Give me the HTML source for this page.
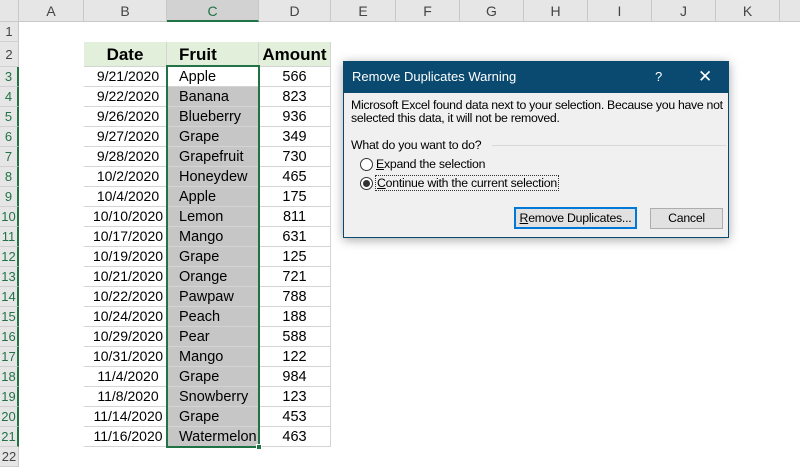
<!DOCTYPE html><html><head><meta charset="utf-8"><style>
*{margin:0;padding:0;box-sizing:border-box}
body{width:800px;height:470px;overflow:hidden;background:#fff;font-family:"Liberation Sans",sans-serif;position:relative}
.a{position:absolute}
.ch{position:absolute;top:0;height:22px;background:#e6e6e6;border-right:1px solid #c8c8c8;border-bottom:1px solid #c8c8c8;font-size:14px;color:#444;text-align:center;line-height:22px}
.rh{position:absolute;left:0;width:19px;height:20px;background:#e6e6e6;border-bottom:1px solid #d0d0d0;border-right:1px solid #c8c8c8;font-size:13px;color:#444;text-align:center;line-height:20px}
.rh.s{color:#217346;border-right:2px solid #217346}
.r{position:absolute;left:84px;width:247px;height:20px;font-size:14.5px;line-height:20px;border-bottom:1px solid #d4d4d4}
.r span{position:absolute;top:0}
.b{left:0;width:83px;text-align:center;padding-left:6px;border-right:1px solid #d4d4d4;height:20px;font-size:14px;line-height:19px}
.c{left:84px;width:91px;padding-left:11px;height:19px;background:#c6c6c6;border-right:1px solid #d4d4d4;white-space:nowrap}
.d{left:175px;width:72px;text-align:center;height:20px;border-right:1px solid #d4d4d4}
.dl{font-size:12.3px;letter-spacing:-0.25px}
</style></head><body>
<div class="ch" style="left:0;width:19px"></div>
<div class="ch" style="left:19px;width:65px">A</div>
<div class="ch" style="left:84px;width:83px">B</div>
<div class="ch" style="left:167px;width:92px;background:#d2d2d2;border-bottom:2px solid #217346;color:#217346">C</div>
<div class="ch" style="left:259px;width:72px">D</div>
<div class="ch" style="left:331px;width:65px">E</div>
<div class="ch" style="left:396px;width:64px">F</div>
<div class="ch" style="left:460px;width:64px">G</div>
<div class="ch" style="left:524px;width:64px">H</div>
<div class="ch" style="left:588px;width:64px">I</div>
<div class="ch" style="left:652px;width:64px">J</div>
<div class="ch" style="left:716px;width:64px">K</div>
<div class="ch" style="left:780px;width:30px"></div>
<div class="rh" style="top:22px">1</div>
<div class="rh" style="top:42px;height:25px;line-height:25px">2</div>
<div class="rh" style="top:447px">22</div>
<div class="a" style="left:84px;top:42px;width:247px;height:25px;background:#e2efda;border-bottom:1px solid #d4d4d4;font-weight:bold;font-size:17px;line-height:25px">
<span class="a" style="left:0;width:83px;text-align:center;border-right:1px solid #d4d4d4;height:25px">Date</span>
<span class="a" style="left:83px;width:92px;padding-left:12px;border-right:1px solid #d4d4d4;height:25px">Fruit</span>
<span class="a" style="left:175px;width:72px;text-align:center;border-right:1px solid #d4d4d4;height:25px">Amount</span></div>
<div class="rh s" style="top:67px">3</div><div class="r" style="top:67px"><span class="b">9/21/2020</span><span class="c" style="background:#fff">Apple</span><span class="d">566</span></div>
<div class="rh s" style="top:87px">4</div><div class="r" style="top:87px"><span class="b">9/22/2020</span><span class="c">Banana</span><span class="d">823</span></div>
<div class="rh s" style="top:107px">5</div><div class="r" style="top:107px"><span class="b">9/26/2020</span><span class="c">Blueberry</span><span class="d">936</span></div>
<div class="rh s" style="top:127px">6</div><div class="r" style="top:127px"><span class="b">9/27/2020</span><span class="c">Grape</span><span class="d">349</span></div>
<div class="rh s" style="top:147px">7</div><div class="r" style="top:147px"><span class="b">9/28/2020</span><span class="c">Grapefruit</span><span class="d">730</span></div>
<div class="rh s" style="top:167px">8</div><div class="r" style="top:167px"><span class="b">10/2/2020</span><span class="c">Honeydew</span><span class="d">465</span></div>
<div class="rh s" style="top:187px">9</div><div class="r" style="top:187px"><span class="b">10/4/2020</span><span class="c">Apple</span><span class="d">175</span></div>
<div class="rh s" style="top:207px">10</div><div class="r" style="top:207px"><span class="b">10/10/2020</span><span class="c">Lemon</span><span class="d">811</span></div>
<div class="rh s" style="top:227px">11</div><div class="r" style="top:227px"><span class="b">10/17/2020</span><span class="c">Mango</span><span class="d">631</span></div>
<div class="rh s" style="top:247px">12</div><div class="r" style="top:247px"><span class="b">10/19/2020</span><span class="c">Grape</span><span class="d">125</span></div>
<div class="rh s" style="top:267px">13</div><div class="r" style="top:267px"><span class="b">10/21/2020</span><span class="c">Orange</span><span class="d">721</span></div>
<div class="rh s" style="top:287px">14</div><div class="r" style="top:287px"><span class="b">10/22/2020</span><span class="c">Pawpaw</span><span class="d">788</span></div>
<div class="rh s" style="top:307px">15</div><div class="r" style="top:307px"><span class="b">10/24/2020</span><span class="c">Peach</span><span class="d">188</span></div>
<div class="rh s" style="top:327px">16</div><div class="r" style="top:327px"><span class="b">10/29/2020</span><span class="c">Pear</span><span class="d">588</span></div>
<div class="rh s" style="top:347px">17</div><div class="r" style="top:347px"><span class="b">10/31/2020</span><span class="c">Mango</span><span class="d">122</span></div>
<div class="rh s" style="top:367px">18</div><div class="r" style="top:367px"><span class="b">11/4/2020</span><span class="c">Grape</span><span class="d">984</span></div>
<div class="rh s" style="top:387px">19</div><div class="r" style="top:387px"><span class="b">11/8/2020</span><span class="c">Snowberry</span><span class="d">123</span></div>
<div class="rh s" style="top:407px">20</div><div class="r" style="top:407px"><span class="b">11/14/2020</span><span class="c">Grape</span><span class="d">453</span></div>
<div class="rh s" style="top:427px">21</div><div class="r" style="top:427px"><span class="b">11/16/2020</span><span class="c">Watermelon</span><span class="d">463</span></div>
<div class="a" style="left:166px;top:65px;width:94px;height:383px;border:2px solid #217346"></div>
<div class="a" style="left:256px;top:444px;width:6px;height:6px;background:#217346;border:1px solid #fff"></div>
<div class="a dl" style="left:343px;top:61px;width:386px;height:177px;background:#f0f0f0;border:1px solid #0b4a70;box-shadow:0 2px 10px rgba(0,0,0,.35);color:#000">
<div style="height:31px;background:#0b4a70;color:#fff;font-size:13px;letter-spacing:0;line-height:30px;padding-left:8px;position:relative">Remove Duplicates Warning
<span class="a" style="left:311px;top:0">?</span>
<span class="a" style="left:354px;top:0;font-size:17px">✕</span></div>
<div class="a" style="left:7px;top:37px;line-height:13px;width:372px;letter-spacing:-0.3px">Microsoft Excel found data next to your selection. Because you have not selected this data, it will not be removed.</div>
<div class="a" style="left:7px;top:76px">What do you want to do?</div>
<div class="a" style="left:148px;top:83px;width:234px;height:1px;background:#d8d8d8"></div>
<div class="a" style="left:16px;top:96px;width:13px;height:13px;border:1px solid #333;border-radius:50%;background:#fff"></div>
<div class="a" style="left:32px;top:95px"><u>E</u>xpand the selection</div>
<div class="a" style="left:16px;top:115px;width:13px;height:13px;border:1px solid #333;border-radius:50%;background:#fff"><div style="margin:2px;width:7px;height:7px;border-radius:50%;background:#333"></div></div>
<div class="a" style="left:31px;top:113px;border:1px dotted #333;padding:0 1px"><u>C</u>ontinue with the current selection</div>
<div class="a" style="left:170px;top:145px;width:123px;height:22px;border:2px solid #0078d7;background:#e1e1e1;text-align:center;line-height:18px"><u>R</u>emove Duplicates...</div>
<div class="a" style="left:306px;top:146px;width:73px;height:21px;border:1px solid #adadad;background:#e1e1e1;text-align:center;line-height:19px">Cancel</div>
</div>
</body></html>
